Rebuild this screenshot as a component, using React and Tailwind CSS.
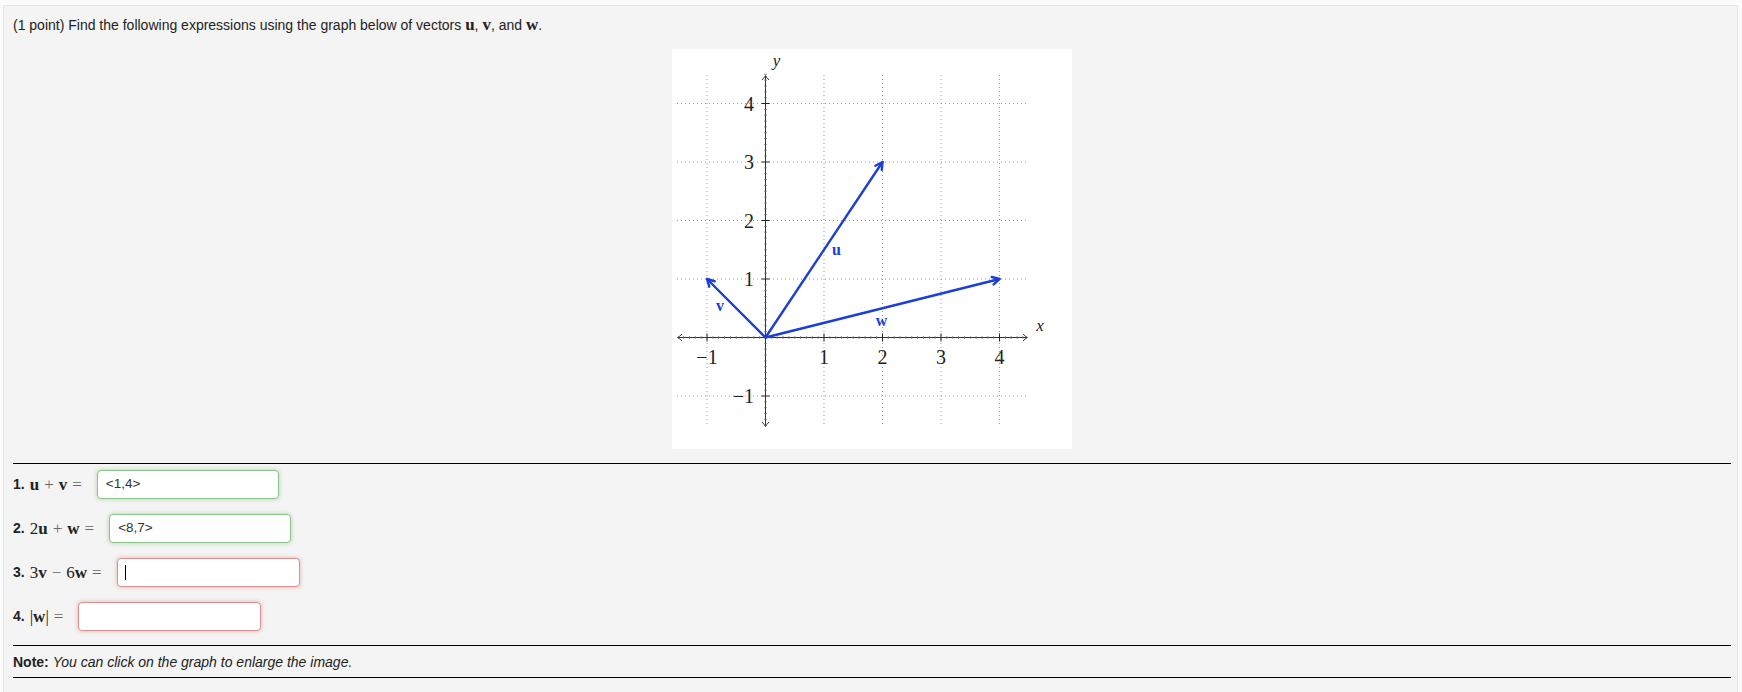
import React from 'react';

const O = { x: 93.5, y: 288.5 };
const U = 58.5;
const px = (x) => O.x + x * U;
const py = (y) => O.y - y * U;
const BLUE = '#1d3fd6';

const arrowHead = (x1, y1, x2, y2, len = 8, spread = 0.5) => {
  const a = Math.atan2(y2 - y1, x2 - x1);
  const l1 = [x2 - len * Math.cos(a - spread), y2 - len * Math.sin(a - spread)];
  const l2 = [x2 - len * Math.cos(a + spread), y2 - len * Math.sin(a + spread)];
  return `M ${l1[0]} ${l1[1]} L ${x2} ${y2} L ${l2[0]} ${l2[1]}`;
};

const Vector = ({ x, y }) => {
  const x2 = px(x);
  const y2 = py(y);
  return (
    <g stroke={BLUE} strokeWidth="2.4" fill="none" strokeLinecap="round" strokeLinejoin="round">
      <line x1={O.x} y1={O.y} x2={x2} y2={y2} />
      <path d={arrowHead(O.x, O.y, x2, y2)} />
    </g>
  );
};

const Graph = () => {
  const gridX = [-1, 1, 2, 3, 4];
  const gridY = [-1, 1, 2, 3, 4];
  const minor = [];
  for (let i = -14; i <= 44; i++) {
    if (i % 10 === 0) continue;
    minor.push(i / 10);
  }
  const minorY = [];
  for (let i = -15; i <= 45; i++) {
    if (i % 10 === 0) continue;
    minorY.push(i / 10);
  }
  const num = { fontFamily: '"Liberation Serif", "DejaVu Serif", serif', fontSize: 20, fill: '#222' };

  return (
    <svg width="400" height="400" viewBox="0 0 400 400" className="block bg-white">
      {/* dotted grid */}
      <g stroke="#9a9a9a" strokeWidth="1" strokeDasharray="1 3">
        {gridX.map((g) => (
          <line key={'gx' + g} x1={px(g)} y1={26} x2={px(g)} y2={378} />
        ))}
        {gridY.map((g) => (
          <line key={'gy' + g} x1={5} y1={py(g)} x2={356} y2={py(g)} />
        ))}
      </g>

      {/* axes */}
      <g stroke="#333" strokeWidth="1" fill="none">
        <line x1={6} y1={O.y} x2={355} y2={O.y} />
        <line x1={O.x} y1={27} x2={O.x} y2={377} />
        <path d={`M 10 ${O.y - 3.5} Q 7 ${O.y - 0.5} 5.5 ${O.y} Q 7 ${O.y + 0.5} 10 ${O.y + 3.5}`} />
        <path d={`M 351 ${O.y - 3.5} Q 354 ${O.y - 0.5} 355.5 ${O.y} Q 354 ${O.y + 0.5} 351 ${O.y + 3.5}`} />
        <path d={`M ${O.x - 3.5} 31 Q ${O.x - 0.5} 28 ${O.x} 26.5 Q ${O.x + 0.5} 28 ${O.x + 3.5} 31`} />
        <path d={`M ${O.x - 3.5} 373 Q ${O.x - 0.5} 376 ${O.x} 377.5 Q ${O.x + 0.5} 376 ${O.x + 3.5} 373`} />
      </g>

      {/* minor ticks */}
      <g stroke="#777" strokeWidth="0.8">
        {minor.map((m) => (
          <line key={'mx' + m} x1={px(m)} y1={O.y - 1.5} x2={px(m)} y2={O.y + 1.5} />
        ))}
        {minorY.map((m) => (
          <line key={'my' + m} x1={O.x - 1.5} y1={py(m)} x2={O.x + 1.5} y2={py(m)} />
        ))}
      </g>

      {/* major ticks */}
      <g stroke="#222" strokeWidth="1">
        {gridX.map((g) => (
          <line key={'tx' + g} x1={px(g)} y1={O.y - 4} x2={px(g)} y2={O.y + 4} />
        ))}
        {gridY.map((g) => (
          <line key={'ty' + g} x1={O.x - 4} y1={py(g)} x2={O.x + 4} y2={py(g)} />
        ))}
      </g>

      {/* tick labels */}
      {gridX.map((g) => (
        <text key={'lx' + g} x={px(g)} y={314.5} textAnchor="middle" style={num}>
          {g < 0 ? '\u2212' + Math.abs(g) : g}
        </text>
      ))}
      {gridY.map((g) => (
        <text key={'ly' + g} x={82} y={py(g) + 7} textAnchor="end" style={num}>
          {g < 0 ? '\u2212' + Math.abs(g) : g}
        </text>
      ))}

      {/* axis names */}
      <text x={104.5} y={17} textAnchor="middle" style={{ ...num, fontSize: 17, fontStyle: 'italic' }}>y</text>
      <text x={368} y={282} textAnchor="middle" style={{ ...num, fontSize: 17, fontStyle: 'italic' }}>x</text>

      {/* vectors */}
      <Vector x={2} y={3} />
      <Vector x={-1} y={1} />
      <Vector x={4} y={1} />

      <g style={{ fontFamily: '"Liberation Serif", "DejaVu Serif", serif', fontSize: 16, fontWeight: 700, fill: BLUE }}>
        <text x={164.5} y={206} textAnchor="middle">u</text>
        <text x={48} y={262} textAnchor="middle">v</text>
        <text x={209.5} y={277} textAnchor="middle">w</text>
      </g>
    </svg>
  );
};

const M = ({ children, bold }) => (
  <span className={`font-['Liberation_Serif','DejaVu_Serif',serif] text-[17px] text-[#222] ${bold ? 'font-bold' : ''}`}>
    {children}
  </span>
);

const Op = ({ children }) => (
  <span className="font-['Liberation_Serif','DejaVu_Serif',serif] text-[17px] text-[#666] mx-[5px]">{children}</span>
);

const AnswerBox = ({ value, state, width, caret }) => {
  const tone =
    state === 'ok'
      ? 'border-[#8cc58c] shadow-[0_0_4px_rgba(92,170,92,0.45)]'
      : 'border-[#dc9090] shadow-[0_0_4px_rgba(210,90,90,0.45)]';
  return (
    <div
      className={`h-[29px] ${width} ml-[10px] bg-white border rounded-[4px] ${tone} flex items-center pl-[8px] text-[13.5px] text-[#333] font-['Liberation_Sans',Arial,sans-serif]`}
    >
      {value}
      {caret && <span className="block w-[1px] h-[15px] bg-black -ml-[1px]" />}
    </div>
  );
};

const Row = ({ n, children, box }) => (
  <div className="flex items-center h-[29px]">
    <span className="font-bold text-[14px] text-[#222] mr-[5px]">{n}.</span>
    {children}
    {box}
  </div>
);

export default function App() {
  return (
    <div className="w-full h-[692px] overflow-hidden bg-[#fbfbfb] pt-[5px] pl-[3px] pr-[4px] font-['Liberation_Sans',Arial,sans-serif]">
      <div className="bg-[#f4f4f4] border border-[#e4e4e4] border-b-0 pl-[9px] pr-[6px] pt-[10px] h-[700px]">
        <p className="text-[14px] leading-[18px] text-[#222]">
          (1 point) Find the following expressions using the graph below of vectors{' '}
          <M bold>u</M>, <M bold>v</M>, and <M bold>w</M>.
        </p>

        <div className="flex justify-center mt-[15px]">
          <Graph />
        </div>

        <div className="mt-[14px] border-t border-black" />

        <div className="flex flex-col gap-[15px] mt-[6px]">
          <Row n="1" box={<AnswerBox value="<1,4>" state="ok" width="w-[182px]" />}>
            <M bold>u</M>
            <Op>+</Op>
            <M bold>v</M>
            <Op>=</Op>
          </Row>
          <Row n="2" box={<AnswerBox value="<8,7>" state="ok" width="w-[182px]" />}>
            <M>2</M>
            <M bold>u</M>
            <Op>+</Op>
            <M bold>w</M>
            <Op>=</Op>
          </Row>
          <Row n="3" box={<AnswerBox value="" state="bad" width="w-[183px]" caret />}>
            <M>3</M>
            <M bold>v</M>
            <Op>−</Op>
            <M>6</M>
            <M bold>w</M>
            <Op>=</Op>
          </Row>
          <Row n="4" box={<AnswerBox value="" state="bad" width="w-[183px]" />}>
            <M>|</M>
            <M bold>w</M>
            <M>|</M>
            <Op>=</Op>
          </Row>
        </div>

        <div className="mt-[14px] border-t border-black" />
        <p className="mt-[7px] text-[14px] leading-[18px] text-[#222]">
          <span className="font-bold">Note:</span> <em>You can click on the graph to enlarge the image.</em>
        </p>
        <div className="mt-[6px] border-t border-black" />
      </div>
    </div>
  );
}
